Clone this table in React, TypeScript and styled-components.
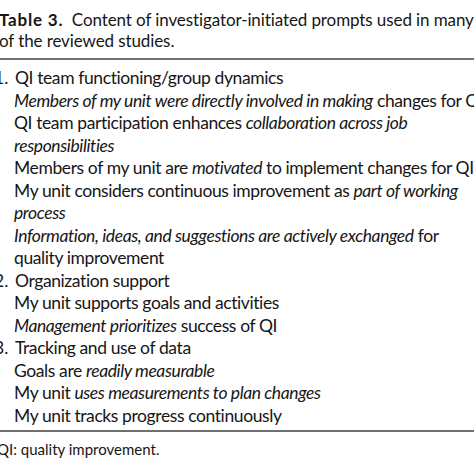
import { ReactNode } from 'react';
import { createGlobalStyle, styled } from 'styled-components';

const GlobalStyle = createGlobalStyle`
  html, body {
    margin: 0;
    padding: 0;
    background: #ffffff;
  }

  body {
    width: 474px;
    height: 474px;
    overflow: hidden;
    font-family: Lato, "Open Sans", sans-serif;
    color: #161616;
  }
`;

type Section = {
  num: string;
  title: string;
  lines: ReactNode[];
};

const SECTIONS: Section[] = [
  {
    num: '1.',
    title: 'QI team functioning/group dynamics',
    lines: [
      <>
        <em>Members of my unit were directly involved in making</em> changes for QI
      </>,
      <>
        QI team participation enhances <em>collaboration across job</em>
      </>,
      <em>responsibilities</em>,
      <>
        Members of my unit are <em>motivated</em> to implement changes for QI
      </>,
      <>
        My unit considers continuous improvement as <em>part of working</em>
      </>,
      <em>process</em>,
      <>
        <em>Information, ideas, and suggestions are actively exchanged</em> for
      </>,
      <>quality improvement</>,
    ],
  },
  {
    num: '2.',
    title: 'Organization support',
    lines: [
      <>My unit supports goals and activities</>,
      <>
        <em>Management prioritizes</em> success of QI
      </>,
    ],
  },
  {
    num: '3.',
    title: 'Tracking and use of data',
    lines: [
      <>
        Goals are <em>readily measurable</em>
      </>,
      <>
        My unit <em>uses measurements to plan changes</em>
      </>,
      <>My unit tracks progress continuously</>,
    ],
  },
];

const App = () => {
  return (
    <>
      <GlobalStyle />
      <S.Page>
        <S.Caption>
          <b>Table 3.</b>
          {'  '}Content of investigator-initiated prompts used in many
          <br />
          of the reviewed studies.
        </S.Caption>
        <S.Rule />
        <S.Body>
          {SECTIONS.map((section) => (
            <S.Group key={section.num}>
              <S.Num>{section.num}</S.Num>
              <S.Line>{section.title}</S.Line>
              {section.lines.map((line, i) => (
                <S.Line key={i} $sub>
                  {line}
                </S.Line>
              ))}
            </S.Group>
          ))}
        </S.Body>
        <S.Rule $bottom />
        <S.Note>QI: quality improvement.</S.Note>
      </S.Page>
    </>
  );
};

const S = {
  Page: styled.div`
    display: flex;
    flex-direction: column;

    width: 520px;
    margin-left: -1px;
    padding-top: 9px;
  `,

  Caption: styled.p`
    margin: 0;

    font-size: 17px;
    line-height: 21px;
    letter-spacing: -0.1px;
    white-space: pre;

    & > b {
      letter-spacing: 0.8px;
    }
  `,

  Rule: styled.hr<{ $bottom?: boolean }>`
    width: 100%;
    height: 2px;
    margin: ${({ $bottom }) => ($bottom ? '3px 0 0' : '7px 0 0')};
    border: none;

    background-color: #6f6f6f;
  `,

  Body: styled.div`
    display: flex;
    flex-direction: column;

    padding-top: 7px;
  `,

  Group: styled.div`
    display: grid;
    grid-template-columns: 21px auto;

    margin-left: -5px;
  `,

  Num: styled.span`
    grid-column: 1;
    grid-row: 1;

    font-size: 17.5px;
    line-height: 22.5px;
  `,

  Line: styled.div<{ $sub?: boolean }>`
    grid-column: 2;

    font-size: 17.5px;
    line-height: 22.5px;
    letter-spacing: -0.4px;
    white-space: nowrap;

    margin-left: ${({ $sub }) => ($sub ? '-1px' : '0')};

    & em {
      font-style: italic;
    }
  `,

  Note: styled.p`
    margin: 8px 0 0 -2px;

    font-size: 15px;
    line-height: 18px;
  `,
};

export default App;
